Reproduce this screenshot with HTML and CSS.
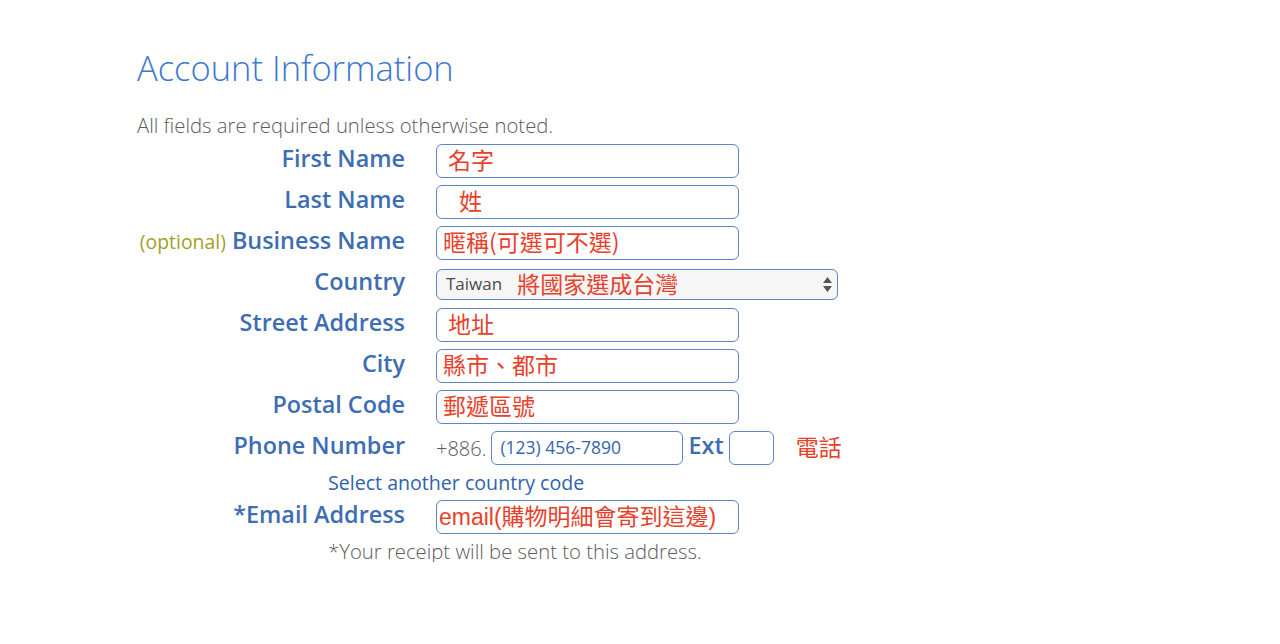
FILE: index.html
```html
<!DOCTYPE html>
<html lang="zh-Hant">
<head>
<meta charset="utf-8">
<title>Account Information</title>
<link rel="stylesheet" href="styles.css">
</head>
<body>
<main class="page">
  <h1 class="title">Account Information</h1>
  <p class="note">All fields are required unless otherwise noted.</p>
  <form class="form">
    <label class="label">First Name</label>
    <div class="field"><div class="box"><span class="red pad-12">名字</span></div></div>

    <label class="label">Last Name</label>
    <div class="field"><div class="box"><span class="red pad-23">姓</span></div></div>

    <label class="label"><span class="optional">(optional)</span> Business Name</label>
    <div class="field"><div class="box"><span class="red pad-7">暱稱(可選可不選)</span></div></div>

    <label class="label">Country</label>
    <div class="field field-center">
      <div class="select">
        <span class="select-value">Taiwan</span>
        <span class="red select-note">將國家選成台灣</span>
        <svg class="select-arrows" width="11" height="17" viewBox="0 0 11 17"><path d="M5.5 1 L10 7 H1 Z M5.5 16 L10 10 H1 Z" fill="#555"/></svg>
      </div>
    </div>

    <label class="label">Street Address</label>
    <div class="field"><div class="box"><span class="red pad-12">地址</span></div></div>

    <label class="label">City</label>
    <div class="field"><div class="box"><span class="red pad-7">縣市、都市</span></div></div>

    <label class="label">Postal Code</label>
    <div class="field"><div class="box"><span class="red pad-7">郵遞區號</span></div></div>

    <label class="label">Phone Number</label>
    <div class="field phone">
      <span class="prefix">+886.</span>
      <div class="box box-phone"><span class="placeholder">(123) 456-7890</span></div>
      <span class="ext">Ext</span>
      <div class="box box-ext"></div>
      <span class="red phone-note">電話</span>
    </div>

    <div class="line-link">Select another country code</div>

    <label class="label">*Email Address</label>
    <div class="field"><div class="box"><span class="red red-latin pad-3">email(購物明細會寄到這邊)</span></div></div>

    <div class="line-receipt">*Your receipt will be sent to this address.</div>
  </form>
</main>
</body>
</html>
```

FILE: styles.css
```css
html, body {
  margin: 0;
  padding: 0;
  background: #ffffff;
}

body {
  font-family: "Open Sans", "Noto Sans CJK TC", sans-serif;
}

.page {
  padding: 46px 0 0 137px;
}

.title {
  margin: 0;
  font-size: 34.5px;
  line-height: 44px;
  font-weight: 300;
  color: #3b78cf;
}

.note {
  margin: 23px 0 7px;
  font-size: 20.3px;
  line-height: 24px;
  font-weight: 300;
  color: #5c5c5c;
}

.form {
  display: grid;
  grid-template-columns: 268px auto;
  column-gap: 31px;
  row-gap: 7px;
  align-items: start;
}

.label {
  text-align: right;
  font-size: 23.4px;
  line-height: 28px;
  font-weight: 600;
  color: #3d6db3;
  white-space: nowrap;
}

.optional {
  font-size: 19.4px;
  font-weight: 400;
  color: #a39f29;
}

.field {
  height: 34px;
  display: flex;
  align-items: center;
}

.box {
  box-sizing: border-box;
  width: 303px;
  height: 34px;
  border: 1.5px solid #5a86c4;
  border-radius: 6px;
  display: flex;
  align-items: center;
  background: #fff;
}

.red {
  color: #e8412b;
  font-family: "Noto Sans CJK TC", sans-serif;
  font-size: 23px;
  line-height: 30px;
  padding-bottom: 4px;
  white-space: nowrap;
}

.red-latin {
  font-family: "Liberation Sans", "Noto Sans CJK TC", sans-serif;
  padding-bottom: 0;
}

.pad-3 { padding-left: 2px; }
.pad-7 { padding-left: 6px; }
.pad-12 { padding-left: 11px; }
.pad-23 { padding-left: 22px; }

.field-center {
  align-items: center;
}

.select {
  box-sizing: border-box;
  width: 402px;
  height: 31px;
  margin-top: 1px;
  border: 1.5px solid #5a86c4;
  border-radius: 6px;
  background: #f6f6f6;
  display: flex;
  align-items: center;
  padding: 0 4px 0 9px;
}

.select-value {
  font-size: 17px;
  color: #4a4a4a;
  margin-right: 15px;
  padding-bottom: 2px;
}

.select-note {
  flex: 1;
}

.select-arrows {
  display: block;
}

.phone {
  gap: 0;
}

.prefix {
  font-size: 20px;
  font-weight: 300;
  color: #5c5c5c;
  margin-right: 5px;
}

.box-phone {
  width: 192px;
  padding-left: 8px;
}

.placeholder {
  font-size: 17.5px;
  color: #3466b0;
  padding-bottom: 2px;
}

.ext {
  font-size: 23.4px;
  font-weight: 600;
  color: #3d6db3;
  margin: 0 5px 0 5px;
  line-height: 28px;
  align-self: flex-start;
}

.box-ext {
  width: 45px;
}

.phone-note {
  margin-left: 22px;
  line-height: 34px;
}

.line-link,
.line-receipt {
  grid-column: 1 / span 2;
  padding-left: 191px;
  line-height: 21px;
  white-space: nowrap;
}

.line-link {
  font-size: 19.6px;
  color: #2f62b2;
  font-weight: 400;
}

.line-receipt {
  font-size: 20.3px;
  color: #5c5c5c;
  font-weight: 300;
}
```
